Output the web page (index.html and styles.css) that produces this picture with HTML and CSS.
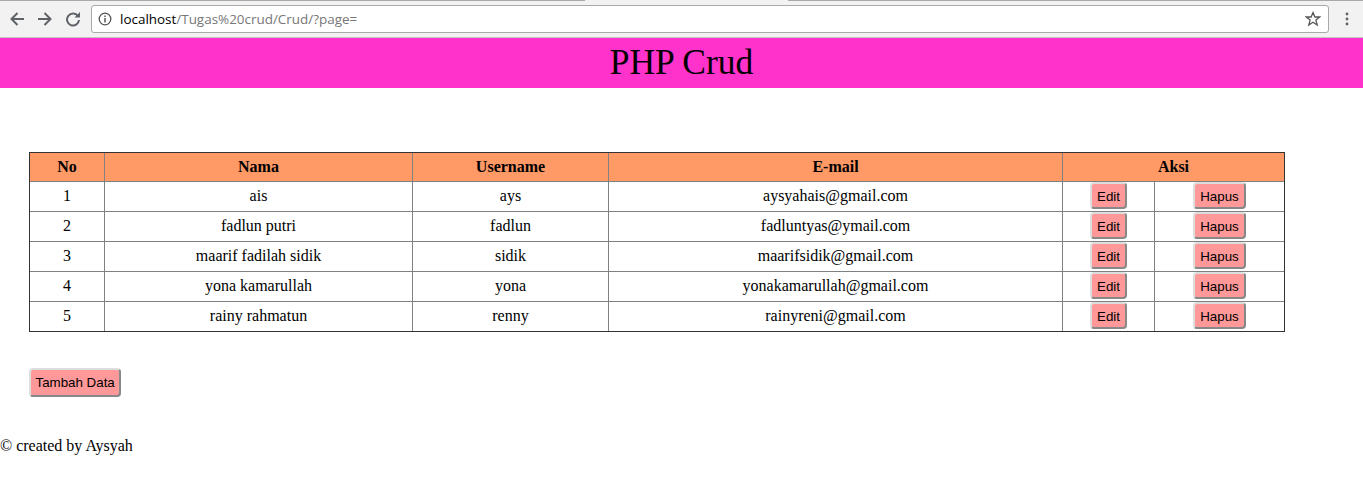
FILE: index.html
```html
<!DOCTYPE html>
<html lang="en">
<head>
    <meta charset="UTF-8">
    <title>PHP Crud</title>
    <link rel="stylesheet" href="styles.css">
</head>
<body>

<!-- Browser toolbar -->
<div class="toolbar">
    <svg class="nav-icon" viewBox="0 0 16 16"><path d="M15 8H2.5M8.5 2L2.5 8L8.5 14" fill="none" stroke="#5f6368" stroke-width="2"/></svg>
    <svg class="nav-icon" viewBox="0 0 16 16"><path d="M1 8H13.5M7.5 2L13.5 8L7.5 14" fill="none" stroke="#5f6368" stroke-width="2"/></svg>
    <svg class="nav-icon" viewBox="0 0 16 16"><path d="M13 5.2A6 6 0 1 0 14 9" fill="none" stroke="#5f6368" stroke-width="2"/><path d="M9.5 6.5H15V1Z" fill="#5f6368"/></svg>
    <div class="address">
        <svg class="info-icon" viewBox="0 0 14 14"><circle cx="7" cy="7" r="5.8" fill="none" stroke="#555" stroke-width="1.3"/><path d="M7 6V10.5M7 3.4V5" stroke="#555" stroke-width="1.5"/></svg>
        <span class="host">localhost</span><span class="path">/Tugas%20crud/Crud/?page=</span>
        <svg class="star-icon" viewBox="0 0 16 16"><path d="M8 1.6L9.9 6H14.7L10.9 9.1L12.2 14L8 11.3L3.8 14L5.1 9.1L1.3 6H6.1Z" fill="none" stroke="#555" stroke-width="1.3"/></svg>
    </div>
    <svg class="menu-icon" viewBox="0 0 4 14"><circle cx="2" cy="2" r="1.4" fill="#5f6368"/><circle cx="2" cy="7" r="1.4" fill="#5f6368"/><circle cx="2" cy="12" r="1.4" fill="#5f6368"/></svg>
</div>

<header class="page-title">PHP Crud</header>

<div class="content">
    <table class="data-table">
        <colgroup>
            <col class="col-no">
            <col class="col-nama">
            <col class="col-user">
            <col class="col-mail">
            <col class="col-edit">
            <col class="col-hapus">
        </colgroup>
        <tr>
            <th>No</th>
            <th>Nama</th>
            <th>Username</th>
            <th>E-mail</th>
            <th colspan="2">Aksi</th>
        </tr>
        <tr>
            <td>1</td><td>ais</td><td>ays</td><td>aysyahais@gmail.com</td>
            <td><button class="btn">Edit</button></td><td><button class="btn">Hapus</button></td>
        </tr>
        <tr>
            <td>2</td><td>fadlun putri</td><td>fadlun</td><td>fadluntyas@ymail.com</td>
            <td><button class="btn">Edit</button></td><td><button class="btn">Hapus</button></td>
        </tr>
        <tr>
            <td>3</td><td>maarif fadilah sidik</td><td>sidik</td><td>maarifsidik@gmail.com</td>
            <td><button class="btn">Edit</button></td><td><button class="btn">Hapus</button></td>
        </tr>
        <tr>
            <td>4</td><td>yona kamarullah</td><td>yona</td><td>yonakamarullah@gmail.com</td>
            <td><button class="btn">Edit</button></td><td><button class="btn">Hapus</button></td>
        </tr>
        <tr>
            <td>5</td><td>rainy rahmatun</td><td>renny</td><td>rainyreni@gmail.com</td>
            <td><button class="btn">Edit</button></td><td><button class="btn">Hapus</button></td>
        </tr>
    </table>

    <button class="btn btn-add">Tambah Data</button>
</div>

<footer>&copy; created by Aysyah</footer>

</body>
</html>
```

FILE: styles.css
```css
body {
    margin: 0;
    background-color: #fff;
    color: #000;
    font-family: "Liberation Serif", serif;
    font-size: 16px;
}

/* Browser toolbar */
.toolbar {
    display: flex;
    align-items: center;
    height: 38px;
    box-sizing: border-box;
    padding: 1px 0 0 9px;
    background: linear-gradient(to right, #a9a9a9 585px, #f2f2f2 585px, #f2f2f2 788px, #a9a9a9 788px) top / 100% 1px no-repeat #f2f2f2;
    border-bottom: 1px solid #c4c4c4;
}

.nav-icon {
    width: 16px;
    height: 16px;
    margin-right: 12px;
}

.address {
    display: flex;
    align-items: center;
    width: 1238px;
    height: 28px;
    box-sizing: border-box;
    margin-left: -2px;
    padding: 0 7px 0 6px;
    background-color: #fff;
    border: 1px solid #a9a9a9;
    border-radius: 3px;
    font-family: "Open Sans", sans-serif;
    font-size: 13.45px;
}

.info-icon {
    width: 14px;
    height: 14px;
    margin-right: 8px;
}

.host {
    color: #000;
}

.path {
    color: #777;
}

.star-icon {
    width: 16px;
    height: 16px;
    margin-left: auto;
}

.menu-icon {
    width: 4px;
    height: 14px;
    margin-left: 16px;
}

/* Page */
.page-title {
    height: 50px;
    line-height: 48px;
    background-color: #ff33cc;
    text-align: center;
    font-size: 35.5px;
}

.content {
    padding: 64px 0 0 29px;
}

.data-table {
    table-layout: fixed;
    width: 1256px;
    border-collapse: separate;
    border-spacing: 0;
    border: 1px solid #333;
}

.col-no { width: 74px; }
.col-nama { width: 308px; }
.col-user { width: 196px; }
.col-mail { width: 454px; }
.col-edit { width: 92px; }
.col-hapus { width: 130px; }

.data-table th,
.data-table td {
    padding: 0 0 2px;
    height: 27px;
    text-align: center;
    border-left: 1px solid #808080;
    border-top: 1px solid #808080;
}

.data-table th {
    padding: 0;
    height: 28px;
    border-top: 0;
    background-color: #ff9966;
}

.data-table th:first-child,
.data-table td:first-child {
    border-left: 0;
}

.btn {
    height: 27px;
    padding: 2px 5px 1px;
    background-color: #ff9999;
    border: 2px solid;
    border-color: #ddd #888 #888 #ddd;
    border-radius: 4px;
    font-family: "Liberation Sans", sans-serif;
    font-size: 13.33px;
    color: #000;
}

.btn-add {
    display: block;
    height: 29px;
    margin: 36px 0 0;
    padding: 1px 4.5px;
}

footer {
    margin-top: 40px;
}
```
